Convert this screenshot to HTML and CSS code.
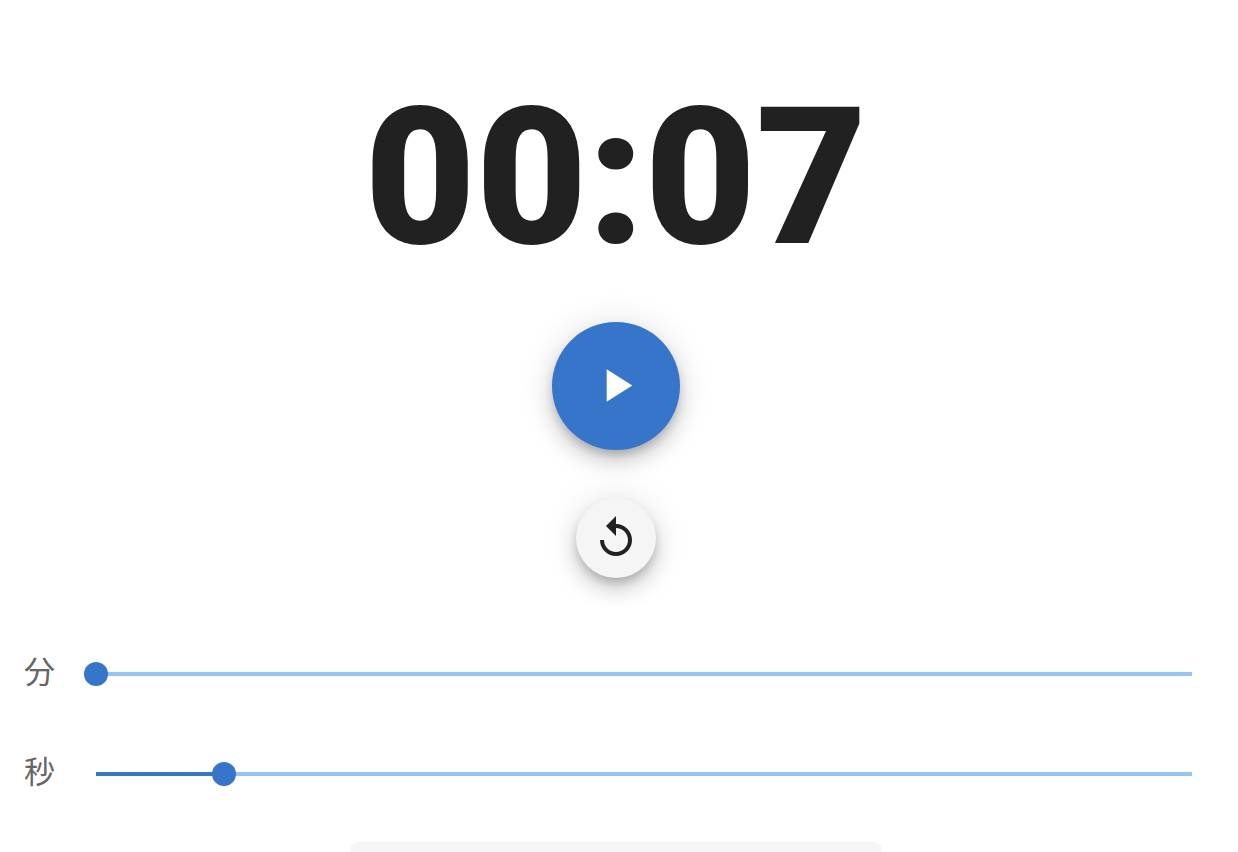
FILE: index.html
```html
<!DOCTYPE html>
<html lang="ja">
<head>
<meta charset="utf-8">
<title>00:07</title>
<link rel="stylesheet" href="styles.css">
</head>
<body>
<main class="timer">
  <h1 class="timer-display">00:07</h1>
  <div class="timer-actions">
    <button class="fab fab-primary" type="button" aria-label="開始">
      <svg class="icon icon-large" viewBox="0 0 24 24" aria-hidden="true"><path fill="currentColor" d="M8 4.8v14l11-7z"/></svg>
    </button>
    <button class="fab fab-small" type="button" aria-label="リセット">
      <svg class="icon" viewBox="0 0 24 24" aria-hidden="true"><path fill="currentColor" d="M12 5V1L7 6l5 5V7c3.31 0 6 2.69 6 6s-2.69 6-6 6-6-2.69-6-6H4c0 4.42 3.58 8 8 8s8-3.58 8-8-3.58-8-8-8z"/></svg>
    </button>
  </div>
  <div class="sliders">
    <div class="slider-row">
      <label class="slider-label" for="minutes">分</label>
      <input class="slider" id="minutes" type="range" min="0" max="60" value="0" style="--fill: 0%">
    </div>
    <div class="slider-row">
      <label class="slider-label" for="seconds">秒</label>
      <input class="slider" id="seconds" type="range" min="0" max="60" value="7" style="--fill: 11.67%">
    </div>
  </div>
  <div class="panel"></div>
</main>
</body>
</html>
```
FILE: styles.css
```css
html {
  overflow: hidden;
}

body {
  margin: 0;
  padding-right: 6px;
  background: #fff;
  color: #212121;
  font-family: Roboto, "Noto Sans CJK JP", sans-serif;
}

.timer {
  display: flex;
  flex-direction: column;
  align-items: center;
  padding-top: 82px;
}

.timer-display {
  margin: 0;
  font-size: 192px;
  font-weight: 900;
  line-height: 192px;
}

.timer-actions {
  display: flex;
  flex-direction: column;
  align-items: center;
  gap: 48px;
  padding-top: 48px;
}

.fab {
  display: flex;
  align-items: center;
  justify-content: center;
  width: 128px;
  height: 128px;
  padding: 0;
  border: 0;
  border-radius: 50%;
  box-shadow: 0 6px 10px -2px rgba(0, 0, 0, .2), 0 12px 20px rgba(0, 0, 0, .14), 0 2px 36px rgba(0, 0, 0, .12);
  cursor: pointer;
}

.fab-primary {
  background: #3575ca;
  color: #fff;
}

.fab-small {
  width: 80px;
  height: 80px;
  background: #f5f5f5;
  color: #212121;
}

.icon {
  width: 48px;
  height: 48px;
}

.icon-large {
  width: 56px;
  height: 56px;
}

.sliders {
  display: flex;
  flex-direction: column;
  gap: 36px;
  align-self: stretch;
  padding: 64px 28px 0 24px;
}

.slider-row {
  display: flex;
  align-items: center;
  gap: 28px;
  height: 64px;
}

.slider-label {
  width: 32px;
  padding-bottom: 2px;
  color: #666;
  font-size: 31px;
  line-height: 62px;
}

.slider {
  flex: 1;
  min-width: 0;
  height: 24px;
  margin: 0;
  appearance: none;
  background: linear-gradient(to right, #3575ca var(--fill), #95c3fc var(--fill)) center / calc(100% - 24px) 4px no-repeat;
  cursor: pointer;
}

.slider::-webkit-slider-thumb {
  appearance: none;
  width: 24px;
  height: 24px;
  border-radius: 50%;
  background: #3575ca;
}

.panel {
  width: 100%;
  max-width: 532px;
  height: 72px;
  margin-top: 36px;
  border-radius: 8px;
  background: #f6f6f6;
}
```
